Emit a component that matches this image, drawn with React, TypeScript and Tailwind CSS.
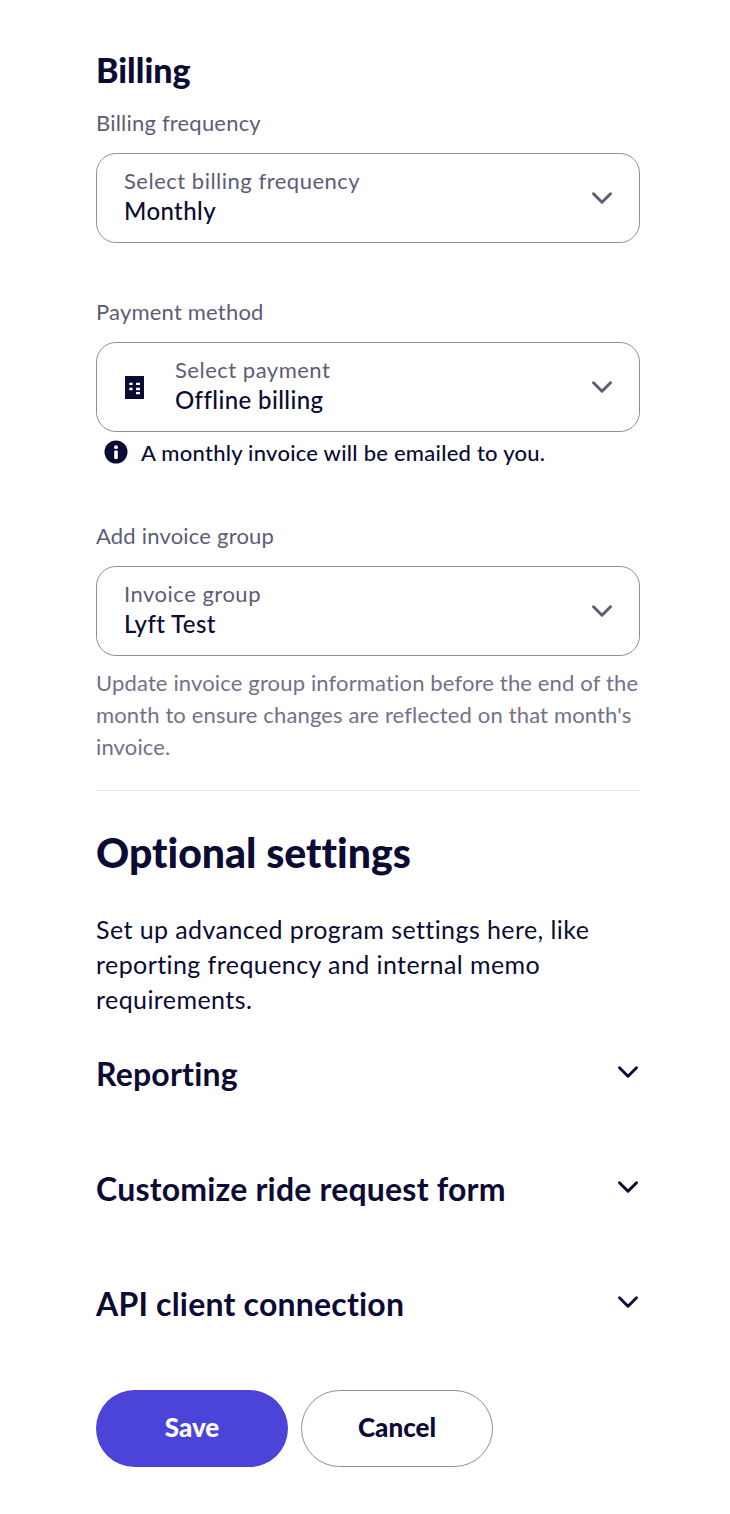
import { ChevronDown } from "lucide-react";

const body = "font-['Lato','Noto_Sans',sans-serif] [font-variant-ligatures:none]";

function OfflineIcon() {
  return (
    <svg width="19" height="23" viewBox="0 0 19 23" className="shrink-0">
      <path
        fillRule="evenodd"
        d="M0 0h19v23H0zM4.3 6.7v2.4h3.3V6.7zM11 6.7v2.4h4V6.7zM4.3 11.7v2.6h3.3v-2.6zM11 11.7v2.6h4v-2.6zM11 16v2.3h4V16z"
        fill="#0c0b33"
      />
    </svg>
  );
}

function InfoIcon() {
  return (
    <svg width="24" height="24" viewBox="0 0 24 24" className="shrink-0">
      <circle cx="12" cy="12" r="11.5" fill="#0c0b33" />
      <circle cx="12" cy="7.2" r="1.9" fill="#fff" />
      <rect x="10.2" y="10.5" width="3.6" height="8.5" rx="0.8" fill="#fff" />
    </svg>
  );
}

function SelectBox({ label, value, icon }: { label: string; value: string; icon?: React.ReactNode }) {
  return (
    <div className="flex h-[90px] items-center rounded-[20px] border border-[#8f8ea3] pl-[27px] pr-[20px]">
      {icon && <div className="mr-[30px] flex w-[21px] justify-center">{icon}</div>}
      <div className="mt-[-5px] flex-1 leading-[30px]">
        <div className="text-[22px] tracking-[0.5px] text-[#5d5c76]">{label}</div>
        <div className="text-[24px] font-medium tracking-[0.4px] text-[#0c0b33]">{value}</div>
      </div>
      <ChevronDown size={34} strokeWidth={2.1} className="text-[#5d5c76]" />
    </div>
  );
}

function Accordion({ title }: { title: string }) {
  return (
    <div className="flex h-[115px] justify-between">
      <div className="text-[32px] font-bold leading-[40px] tracking-[0.2px] text-[#0c0b33]">{title}</div>
      <ChevronDown size={34} strokeWidth={2.1} className="mr-[-5px] mt-[1px] text-[#0c0b33]" />
    </div>
  );
}

export default function App() {
  return (
    <div className={`${body} min-h-screen w-[730px] bg-white pl-[96px] pr-[90px] pt-[47px]`}>
      <h2 className="text-[34px] font-black leading-[46px] text-[#0c0b33]">Billing</h2>
      <p className="mt-[16px] text-[22px] leading-[28px] tracking-[0.2px] text-[#5d5c76]">Billing frequency</p>
      <div className="mt-[16px]">
        <SelectBox label="Select billing frequency" value="Monthly" />
      </div>

      <p className="mt-[55px] text-[22px] leading-[28px] tracking-[0.2px] text-[#5d5c76]">Payment method</p>
      <div className="mt-[16px]">
        <SelectBox label="Select payment" value="Offline billing" icon={<OfflineIcon />} />
      </div>
      <div className="mt-[5px] flex h-[30px] items-center gap-[13px] pl-[8px]">
        <InfoIcon />
        <span className="text-[22px] font-medium tracking-[0.25px] text-[#0c0b33]">A monthly invoice will be emailed to you.</span>
      </div>

      <p className="mt-[55px] text-[22px] leading-[28px] tracking-[0.2px] text-[#5d5c76]">Add invoice group</p>
      <div className="mt-[16px]">
        <SelectBox label="Invoice group" value="Lyft Test" />
      </div>
      <p className="mt-[11px] text-[22px] leading-[32px] tracking-[0.15px] text-[#72718a]">
        Update invoice group information before the end of the month to ensure changes are reflected on that month's invoice.
      </p>
      <div className="mt-[27px] h-px bg-[#e8e8ec]" />

      <h1 className="mt-[32px] text-[41px] font-black leading-[60px] text-[#0c0b33]">Optional settings</h1>
      <p className="mt-[29px] text-[25px] leading-[35px] tracking-[0.42px] text-[#0c0b33]">
        Set up advanced program settings here, like reporting frequency and internal memo requirements.
      </p>

      <div className="mt-[37px]">
        <Accordion title="Reporting" />
        <Accordion title="Customize ride request form" />
        <Accordion title="API client connection" />
      </div>

      <div className="mt-[-9px] flex gap-[13px]">
        <button className="h-[77px] w-[192px] rounded-full bg-[#4c44d9] pb-[2px] text-[26px] font-black text-white">Save</button>
        <button className="h-[77px] w-[192px] rounded-full border border-[#8f8ea3] pb-[2px] text-[26px] font-black text-[#0c0b33]">Cancel</button>
      </div>
    </div>
  );
}
